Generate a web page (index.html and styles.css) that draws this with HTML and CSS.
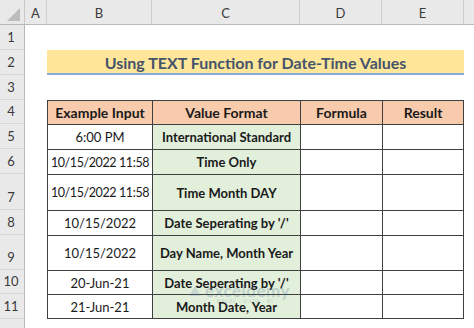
FILE: index.html
```html
<!DOCTYPE html>
<html>
<head>
<meta charset="utf-8">
<link rel="stylesheet" href="styles.css">
</head>
<body>
<div class="sheet">
  <div class="corner"><span class="tri"></span></div>
  <div class="colhead">A</div>
  <div class="colhead">B</div>
  <div class="colhead">C</div>
  <div class="colhead">D</div>
  <div class="colhead">E</div>
  <div class="colhead last"></div>

  <div class="rowhead r1">1</div>
  <div class="rowhead r2">2</div>
  <div class="rowhead r3">3</div>
  <div class="rowhead r4">4</div>
  <div class="rowhead r5">5</div>
  <div class="rowhead r6">6</div>
  <div class="rowhead r7">7</div>
  <div class="rowhead r8">8</div>
  <div class="rowhead r9">9</div>
  <div class="rowhead r10">10</div>
  <div class="rowhead r11">11</div>
  <div class="rowhead r12"></div>

  <div class="title">Using TEXT Function for Date-Time Values</div>

  <div class="table">
    <div class="th">Example Input</div>
    <div class="th">Value Format</div>
    <div class="th">Formula</div>
    <div class="th">Result</div>

    <div class="td">6:00 PM</div>
    <div class="td fmt">International Standard</div>
    <div class="td"></div><div class="td"></div>

    <div class="td tight">10/15/2022 11:58</div>
    <div class="td fmt">Time Only</div>
    <div class="td"></div><div class="td"></div>

    <div class="td tight">10/15/2022 11:58</div>
    <div class="td fmt">Time Month DAY</div>
    <div class="td"></div><div class="td"></div>

    <div class="td">10/15/2022</div>
    <div class="td fmt">Date Seperating by '/'</div>
    <div class="td"></div><div class="td"></div>

    <div class="td">10/15/2022</div>
    <div class="td fmt">Day Name, Month Year</div>
    <div class="td"></div><div class="td"></div>

    <div class="td">20-Jun-21</div>
    <div class="td fmt">Date Seperating by '/'</div>
    <div class="td"></div><div class="td"></div>

    <div class="td">21-Jun-21</div>
    <div class="td fmt">Month Date, Year</div>
    <div class="td"></div><div class="td"></div>

    <div class="watermark">
      <svg class="wm-logo" width="16" height="14" viewBox="0 0 16 14"><path d="M2 12 L8 2 L14 12 Z" fill="#4f7fb0"/></svg>
      <span class="wm-text">exceldemy</span>
      <span class="wm-sub">EXCEL · DATA · BI</span>
    </div>
  </div>
</div>
</body>
</html>
```

FILE: styles.css
```css
html, body {
  margin: 0;
  padding: 0;
  background: #ffffff;
}
body {
  width: 474px;
  height: 328px;
  overflow: hidden;
  font-family: Lato, "Open Sans", sans-serif;
}
.sheet {
  display: grid;
  grid-template-columns: 25px 22px 105px 148px 82px 82px 10px;
  grid-template-rows: 25px 25px 25px 25px 24px 25px 25px 36px 25px 35px 24px 25px 9px;
  width: 474px;
  height: 328px;
  position: relative;
}
.corner {
  background: #e9e9e9;
  border-right: 1px solid #c8c8c8;
  border-bottom: 1px solid #b8b8b8;
  box-sizing: border-box;
  position: relative;
}
.tri {
  position: absolute;
  right: 4px;
  bottom: 3px;
  width: 0;
  height: 0;
  border-left: 13px solid transparent;
  border-bottom: 13px solid #bcbcbc;
}
.colhead {
  background: #e9e9e9;
  border-right: 1px solid #cfcfcf;
  border-bottom: 1px solid #b8b8b8;
  box-sizing: border-box;
  display: flex;
  align-items: center;
  justify-content: center;
  font-size: 13px;
  color: #3a3a3a;
  padding-top: 2px;
}
.colhead.last {
  border-right: none;
}
.rowhead {
  grid-column: 1;
  background: #e9e9e9;
  border-right: 1px solid #b8b8b8;
  border-bottom: 1px solid #d6d6d6;
  box-sizing: border-box;
  display: flex;
  align-items: flex-end;
  justify-content: center;
  font-size: 13px;
  color: #3a3a3a;
  padding-bottom: 4px;
  padding-right: 2px;
}
.rowhead.r12 { border-bottom: none; }
.title {
  grid-column: 3 / 7;
  grid-row: 3;
  background: #ffe699;
  border-bottom: 2px solid #8ea9db;
  box-sizing: border-box;
  display: flex;
  align-items: center;
  justify-content: center;
  font-weight: bold;
  font-size: 16px;
  color: #44546a;
  padding-top: 1px;
}
.table {
  grid-column: 3 / 7;
  grid-row: 5 / 13;
  display: grid;
  grid-template-columns: 104px 147px 81px 80px;
  grid-template-rows: 23px 24px 24px 35px 24px 34px 23px 23px;
  gap: 1px;
  padding: 1px;
  background: #404040;
  box-sizing: border-box;
  width: 417px;
  height: 219px;
  position: relative;
}
.th {
  background: #f8cbad;
  display: flex;
  align-items: center;
  justify-content: center;
  font-weight: bold;
  font-size: 14px;
  color: #1a1a1a;
}
.td {
  background: #ffffff;
  display: flex;
  align-items: center;
  justify-content: center;
  font-size: 13px;
  color: #1a1a1a;
  white-space: nowrap;
}
.td.tight {
  font-size: 12.5px;
  letter-spacing: -0.4px;
}
.td.fmt {
  background: #e2efda;
  font-weight: bold;
  font-size: 13px;
}
.watermark {
  position: absolute;
  left: 140px;
  top: 180px;
  display: flex;
  align-items: center;
  gap: 2px;
  opacity: 0.2;
  pointer-events: none;
}
.wm-text {
  font-size: 17px;
  color: #2f5f92;
  font-weight: bold;
  letter-spacing: 0.5px;
}
.wm-sub {
  position: absolute;
  left: 30px;
  top: 18px;
  font-size: 5px;
  color: #2f5f92;
  letter-spacing: 1px;
}
```
